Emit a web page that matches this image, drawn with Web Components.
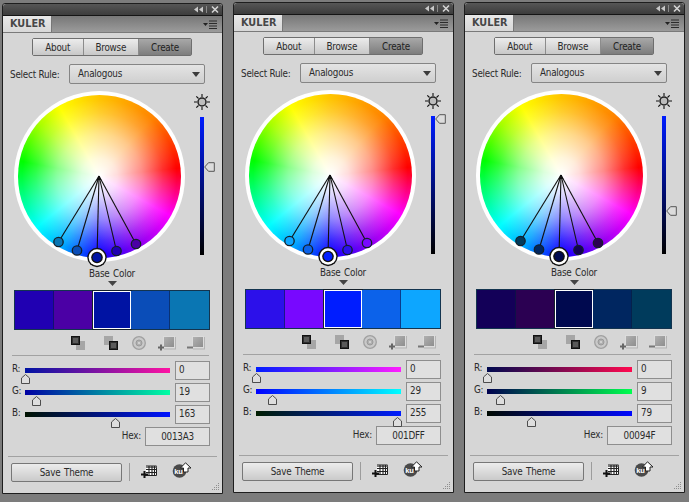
<!DOCTYPE html>
<html lang="en"><head><meta charset="utf-8"><title>Kuler</title>
<style>
html,body{margin:0;height:100%;overflow:hidden}
body{background:#7c7c7c;display:flex;gap:10px;padding:2px 0 0 2px;box-sizing:border-box;align-items:flex-start;
font:9.800px "DejaVu Sans Condensed","DejaVu Sans",sans-serif;font-stretch:condensed;letter-spacing:-.22px;color:#2b2b2b}
</style></head><body>
<ku-panel drop r="0" g="19" b="163" hex="0013A3" rx="0.6" gx="11" bx="90" v="36.500"
 swatches="#2000B2,#4B00A5,#0013A3,#0A4DB8,#0A76B3"></ku-panel>
<ku-panel r="0" g="29" b="255" hex="001DFF" rx="0.6" gx="16" bx="141" v="2"
 swatches="#2C10EA,#7808FF,#001DFF,#0C62EA,#0DA6FF"></ku-panel>
<ku-panel r="0" g="9" b="79" hex="00094F" rx="0.6" gx="13" bx="44" v="69"
 swatches="#130058,#2B0052,#00094F,#002660,#003B5C"></ku-panel>
<script>
function def(name,css,html,init){
  customElements.define(name,class extends HTMLElement{
    connectedCallback(){
      if(this.shadowRoot)return;
      const s=this.attachShadow({mode:'open'});
      s.innerHTML='<style>'+css+'</style>'+(typeof html==='function'?html(this):html);
      if(init)init(this,s);
    }
  });
}
def('ku-titlebar',`:host{display:flex;justify-content:flex-end;align-items:center;height:11px;background:linear-gradient(#565656,#3c3c3c);border-bottom:1px solid #141414;border-radius:3px 3px 0 0;padding-right:3px}
svg{display:block}`,`<svg width="26" height="9" viewBox="0 0 26 9"><path d="M1 4.5 5 1.5V7.5ZM6 4.5 10 1.5V7.5Z" fill="#c9c9c9"/><path d="M13.5 1V8" stroke="#8a8a8a"/><path d="M19 1.5 25 7.5M25 1.5 19 7.5" stroke="#d4d4d4" stroke-width="1.6"/></svg>`);
def('ku-tabstrip',`:host{display:flex;justify-content:space-between;height:16px;background:linear-gradient(#777,#9b9b9b);border-bottom:1px solid #7a7a7a}
.t{width:49px;background:linear-gradient(#e8e8e8,#d8d8d8);border-right:1px solid #777;box-sizing:border-box;padding-left:7px;font-weight:bold;font-size:10.800px;letter-spacing:0;line-height:16px;color:#474747}
svg{margin:4px 4px 0 0;display:block}`,`<div class="t"><slot></slot></div><svg width="15" height="9" viewBox="0 0 15 9"><path d="M0 3H5L2.500 6Z" fill="#222"/><path d="M6 1H14M6 3.500H14M6 6H14M6 8.500H14" stroke="#2b2b2b" stroke-width="1"/></svg>`);
def('ku-seg',`:host{display:flex;align-items:center;justify-content:center;box-sizing:border-box;height:100%;border-right:1px solid #8c8c8c;background:linear-gradient(#ececec,#c8c8c8)}
:host(:last-child){border-right:0}
:host([on]){background:linear-gradient(#a8a8a8,#7d7d7d);color:#222}`,`<slot></slot>`);
def('ku-segmented',`:host{display:grid;grid-template-columns:50.500px 55.500px 52px;margin:5px 0 0 29px;width:160px;height:18px;box-sizing:border-box;border:1px solid #6e6e6e;border-radius:2px;background:#ddd}`,`<slot></slot>`);
def('ku-select',`:host{display:flex;align-items:center;margin:8px 0 0 7px;height:20px}
span{width:59px;flex:none}
.b{width:136px;height:20px;box-sizing:border-box;border:1px solid #858585;border-radius:2px;background:linear-gradient(#e4e4e4,#cfcfcf);display:flex;align-items:center;justify-content:space-between;padding:0 4px 2px 8px}
svg{margin-top:2px}`,h=>`<span>${h.getAttribute('label')}</span><div class="b"><slot></slot><svg width="8" height="5" viewBox="0 0 8 5"><path d="M0 0H8L4 5Z" fill="#3c3c3c"/></svg></div>`);
def('ku-wheel',`:host{display:block;position:relative;width:171px;height:171px;border-radius:50%;background:#fff}
.c{position:absolute;inset:4px;border-radius:50%;background:radial-gradient(circle closest-side,#fff 0,rgba(255,255,255,.86) 22%,rgba(255,255,255,.54) 52%,rgba(255,255,255,.18) 78%,rgba(255,255,255,0) 95%),conic-gradient(#ffc400 0deg,#ff8400 42deg,#ff0000 84deg,#ff00ff 119deg,#8c00f0 150deg,#1000ff 180deg,#00a4ff 207deg,#00ffff 231deg,#00ff8c 254deg,#00ff00 281deg,#a4ff00 310deg,#ffff00 330deg,#ffc400 360deg)}
svg{position:absolute;left:0;top:0;overflow:visible}`,h=>{
 const c=h.getAttribute('colors').split(',');
 const apex=[85,85];
 const H=[[44.500,151,c[4]],[63,159.500,c[3]],[102.500,160,c[0]],[122,153,c[1]]];
 let s='<svg width="171" height="171" viewBox="0 0 171 171">';
 for(const p of [...H,[83,166.500]])s+=`<path d="M${apex[0]} ${apex[1]}L${p[0]} ${p[1]}" stroke="#111" stroke-width="1.100"/>`;
 s+=`<path d="M${apex[0]-2.500} 89 ${apex[0]} ${apex[1]} ${apex[0]+2.500} 89Z" fill="#111"/>`;
 for(const p of H)s+=`<circle cx="${p[0]}" cy="${p[1]}" r="4.700" fill="${p[2]}" stroke="#14202a" stroke-width="1.300"/>`;
 s+=`<circle cx="83" cy="166.500" r="9.700" fill="#111"/><circle cx="83" cy="166.500" r="8.300" fill="#fff"/><circle cx="83" cy="166.500" r="5.800" fill="#111"/><circle cx="83" cy="166.500" r="4.400" fill="${c[2]}"/></svg>`;
 return '<div class="c"></div>'+s;
});
def('ku-brightness',`:host{display:flex;flex-direction:column;align-items:center;width:20px;margin:3px 0 0 7px}
svg{display:block}
.bar{position:relative;width:4px;height:138px;margin-top:7px;background:linear-gradient(#001DFF,#000)}
.th{position:absolute;left:4px}`,h=>`<svg width="16" height="16" viewBox="0 0 16 16"><path d="M8 0V3M8 13V16M0 8H3M13 8H16M2.300 2.300 4.500 4.500M11.500 11.500 13.700 13.700M13.700 2.300 11.500 4.500M4.500 11.500 2.300 13.700" stroke="#111" stroke-width="1.100"/><circle cx="8" cy="8" r="4" fill="#bdbdbd" stroke="#222" stroke-width="1.500"/></svg><div class="bar"><svg class="th" style="top:${(+h.getAttribute('v')/100*138-5).toFixed(1)}px" width="11" height="10" viewBox="0 0 11 10"><path d="M.7 5 4.500.7H10.300V9.300H4.500Z" fill="#dcdcdc" stroke="#555"/></svg></div>`);
def('ku-swatches',`:host{display:flex;flex-direction:column;align-items:center;width:196px;margin:2px 0 0 11px}
.cap{text-align:center;line-height:13px;white-space:nowrap;word-spacing:1px}
.ar{margin-top:1px;display:block}
.row{display:grid;grid-template-columns:repeat(5,1fr);width:100%;height:40px;margin-top:4px;box-sizing:border-box;border:1px solid #13344f;background:#13344f}
.s{position:relative;border-right:1px solid rgba(10,30,60,.55)}.s:last-child{border-right:0}
.sel{outline:1.500px solid #fff;outline-offset:-1.500px;box-shadow:0 0 0 1px #14202a}`,h=>{
 const c=h.getAttribute('colors').split(',');
 return `<div class="cap"><slot></slot></div><svg class="ar" width="9" height="5" viewBox="0 0 9 5"><path d="M0 0H9L4.500 5Z" fill="#444"/></svg><div class="row">${c.map((x,i)=>`<div class="s${i==2?' sel':''}" style="background:${x}"></div>`).join('')}</div>`;
});
const sq=(x,y,s,dark)=>dark?`<rect x="${x+.5}" y="${y+.5}" width="${s-1}" height="${s-1}" fill="#2f2f2f" stroke="#111"/><rect x="${x+2}" y="${y+2}" width="${s-4}" height="${s-4}" fill="#5a5a5a"/>`:`<rect x="${x}" y="${y}" width="${s}" height="${s}" fill="#a6a6a6"/>`;
const plusSq=`<defs><linearGradient id="g" x2="1" y2="1"><stop offset="0" stop-color="#b2b2b2"/><stop offset="1" stop-color="#8c8c8c"/></linearGradient></defs><rect x="5.500" y="1.500" width="11" height="11" fill="url(#g)" stroke="#dcdcdc"/><path d="M6 14H18M17.500 2V14" stroke="#b4b4b4"/>`;
def('ku-tools',`:host{display:flex;height:16px;margin:5px 0 0 68px}
svg{display:block}`,`
<svg width="16" height="16" viewBox="0 0 16 16">${sq(5,6,9,0)}${sq(0,1,9,1)}</svg>
<svg style="margin-left:17px" width="16" height="16" viewBox="0 0 16 16">${sq(0,1,9,0)}${sq(5,6,9,1)}</svg>
<svg style="margin-left:11px" width="16" height="16" viewBox="0 0 16 16"><circle cx="8" cy="8" r="6.300" fill="#c9c9c9" stroke="#a0a0a0" stroke-width="1.300"/><circle cx="8" cy="8" r="3" fill="#b0b0b0" stroke="#9a9a9a"/><circle cx="8" cy="8" r="1.100" fill="#d8d8d8"/></svg>
<svg style="margin-left:11px" width="18" height="16" viewBox="0 0 18 16">${plusSq}<path d="M0 12.500H6M3 9.500V15.500" stroke="#666" stroke-width="2"/></svg>
<svg style="margin-left:11px" width="18" height="16" viewBox="0 0 18 16">${plusSq}<path d="M0 12.500H6" stroke="#777" stroke-width="2"/></svg>`);
def('ku-rule',`:host{display:block;height:1px;background:#a2a2a2}`,``);
def('ku-slider',`:host{display:flex;height:19px;margin-left:9px}
.l{width:13px;line-height:16px}
.tr{position:relative;width:145px;height:4.500px;margin:7px 5px 0 0}
svg{position:absolute;top:6px;left:0}
.in{width:35px;height:19px;box-sizing:border-box;border:1px solid #8e8e8e;background:#e0e0e0;padding-left:3px;line-height:16px}`,h=>`<span class="l">${h.getAttribute('label')}:</span><div class="tr" style="background:linear-gradient(90deg,${h.getAttribute('from')},${h.getAttribute('to')})"><svg style="left:${+h.getAttribute('x')-4.5}px" width="9" height="10" viewBox="0 0 9 10"><path d="M.5 4 4.500.5 8.500 4V9.500H.5Z" fill="#dedede" stroke="#4d4d4d"/></svg></div><div class="in"><slot></slot></div>`);
def('ku-hex',`:host{display:flex;justify-content:flex-end;align-items:center;gap:4px;width:198px;margin-left:9px;height:19px}
span{margin-top:-3px}
.in{width:65px;height:19px;box-sizing:border-box;border:1px solid #8e8e8e;background:#e0e0e0;text-align:center;line-height:17px}`,`<span>Hex:</span><div class="in"><slot></slot></div>`);
def('ku-button',`:host{display:flex;align-items:center;justify-content:center;width:111px;height:19px;box-sizing:border-box;border:1px solid #777;border-radius:2px;background:linear-gradient(#ececec,#cacaca);word-spacing:1px}`,`<slot></slot>`);
def('ku-footer',`:host{display:flex;align-items:flex-start;margin:6px 0 0 8px;height:20px}
.sep{width:1px;height:18px;background:#9c9c9c;margin:0 11px 0 7px}
svg{display:block;margin-top:2px}`,`<slot></slot><div class="sep"></div>
<svg width="16" height="13" viewBox="0 0 16 13"><path d="M5 1H15.500V10.500H4" fill="#fff" stroke="#222" stroke-width="1"/><path d="M5 1H15.500V3H5Z" fill="#777"/><path d="M8 1V10.500M11 1V10.500M13.500 1V10.500M5 4.500H15.500M5 7.500H15.500" stroke="#222" stroke-width="1.100"/><path d="M0 9.500H7M3.500 6V13" stroke="#111" stroke-width="2"/></svg>
<svg style="margin:-1px 0 0 15px" width="20" height="16" viewBox="0 0 20 16"><circle cx="7.500" cy="9" r="6.800" fill="#4a4a4a"/><text x="2.300" y="12" font-size="7.500" font-weight="bold" fill="#fff" font-family="Liberation Sans,sans-serif">ku</text><path d="M13.500 .8 19 6H16V10H11.500V6H8.500Z" fill="#fff" stroke="#222" stroke-width="1"/></svg>`);
def('ku-grip',`:host{position:absolute;right:2px;bottom:2px;width:9px;height:9px}
svg{display:block}`,`<svg width="9" height="9" viewBox="0 0 9 9" fill="#8f8f8f"><rect x="7" y="1" width="1" height="1"/><rect x="5" y="3" width="1" height="1"/><rect x="7" y="3" width="1" height="1"/><rect x="3" y="5" width="1" height="1"/><rect x="5" y="5" width="1" height="1"/><rect x="7" y="5" width="1" height="1"/><rect x="1" y="7" width="1" height="1"/><rect x="3" y="7" width="1" height="1"/><rect x="5" y="7" width="1" height="1"/><rect x="7" y="7" width="1" height="1"/></svg>`);
const hx=(r,g,b)=>'rgb('+r+','+g+','+b+')';
def('ku-panel',`:host{display:flex;flex-direction:column;position:relative;width:221px;height:491px;box-sizing:border-box;border:1px solid #1e1e1e;border-radius:3px 3px 0 0;background:#d6d6d6;flex:none}
:host([drop]){margin-top:1px}
.wr{display:flex;margin:7px 0 0 11px;height:174px}
.h1{margin:4px 0 0 9px;width:197px}.h2{margin:10px 0 0 5px;width:209px}
.rows{display:flex;flex-direction:column;gap:3px;margin-top:5px}`,h=>{
 const a=n=>h.getAttribute(n),r=+a('r'),g=+a('g'),b=+a('b'),sw=a('swatches');
 return `<ku-titlebar></ku-titlebar><ku-tabstrip>KULER</ku-tabstrip>
 <ku-segmented><ku-seg>About</ku-seg><ku-seg>Browse</ku-seg><ku-seg on>Create</ku-seg></ku-segmented>
 <ku-select label="Select Rule:">Analogous</ku-select>
 <div class="wr"><ku-wheel colors="${sw}"></ku-wheel><ku-brightness v="${a('v')}"></ku-brightness></div>
 <ku-swatches colors="${sw}">Base Color</ku-swatches>
 <ku-tools></ku-tools><ku-rule class="h1"></ku-rule>
 <div class="rows">
 <ku-slider label="R" x="${a('rx')}" from="${hx(0,g,b)}" to="${hx(255,g,b)}">${r}</ku-slider>
 <ku-slider label="G" x="${a('gx')}" from="${hx(r,0,b)}" to="${hx(r,255,b)}">${g}</ku-slider>
 <ku-slider label="B" x="${a('bx')}" from="${hx(r,g,0)}" to="${hx(r,g,255)}">${b}</ku-slider>
 <ku-hex>${a('hex')}</ku-hex></div>
 <ku-rule class="h2"></ku-rule>
 <ku-footer><ku-button>Save Theme</ku-button></ku-footer><ku-grip></ku-grip>`;
});
</script>
</body></html>
